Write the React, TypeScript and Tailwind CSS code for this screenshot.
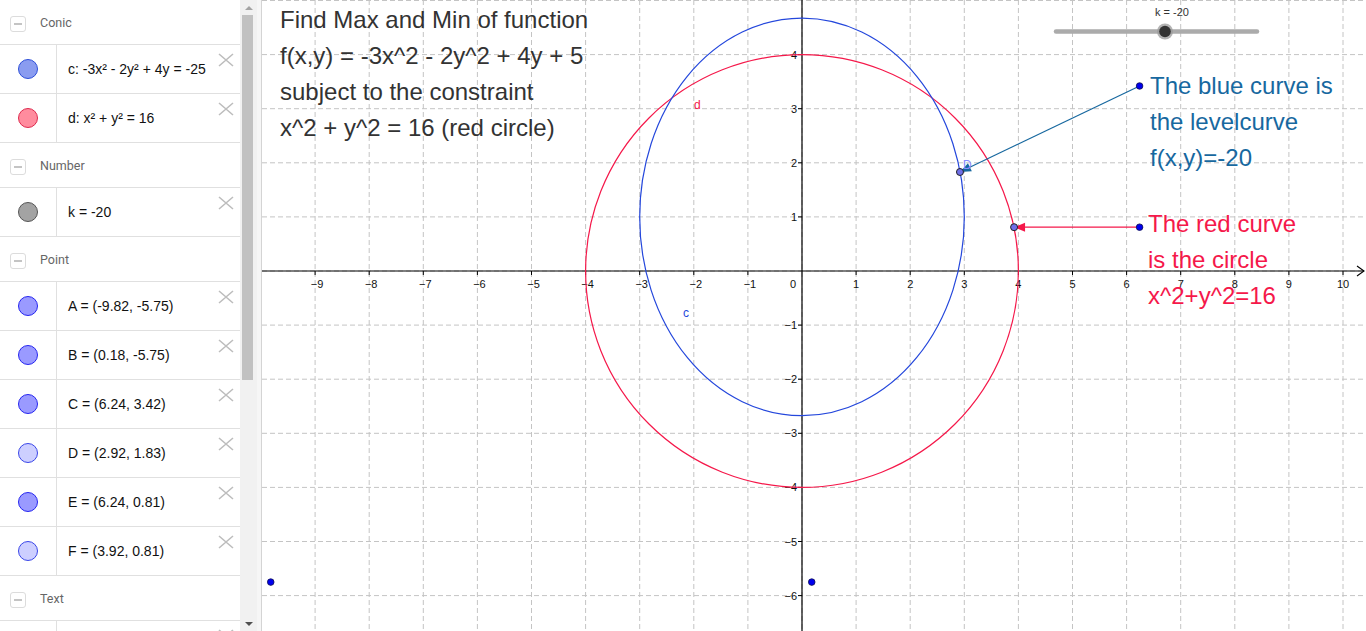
import React from "react";

const OX = 802;
const OY = 271;
const S = 54.1;

function XIcon() {
  return (
    <svg width="16" height="14" viewBox="0 0 16 14" className="block">
      <path d="M1 1 L15 13 M15 1 L1 13" stroke="#bdbdbd" strokeWidth="1.6" fill="none" />
    </svg>
  );
}

function Header({ label }: { label: string }) {
  return (
    <div className="h-[45px] shrink-0 flex items-center border-b border-[#e0e0e0] pl-[10px] pt-[3px]">
      <div className="w-[16px] h-[16px] rounded-[3px] border border-[#dcdcdc] flex items-center justify-center">
        <div className="w-[8px] h-[2px] bg-[#c4c4c4]" />
      </div>
      <span className="ml-[14px] text-[12.5px] text-[#666] font-['Roboto','Liberation_Sans',sans-serif]">{label}</span>
    </div>
  );
}

function Row({ text, fill, border }: { text: string; fill: string; border: string }) {
  return (
    <div className="h-[49px] shrink-0 flex border-b border-[#e0e0e0]">
      <div className="w-[57px] shrink-0 border-r border-[#e0e0e0] flex items-center justify-center">
        <div className={`w-[20px] h-[20px] rounded-full border ${fill} ${border}`} />
      </div>
      <div className="flex-1 relative flex items-center pl-[11px] text-[14px] text-[#111] whitespace-nowrap">
        {text}
        <div className="absolute right-[6px] top-[8px]">
          <XIcon />
        </div>
      </div>
    </div>
  );
}

function Graphics() {
  const vLines: number[] = [];
  for (let i = -10; i <= 10; i++) {
    const x = OX + i * S;
    if (x > 262 && x < 1366) vLines.push(i);
  }
  const hLines: number[] = [];
  for (let j = -7; j <= 5; j++) {
    const y = OY - j * S;
    if (y >= 0 && y < 631) hLines.push(j);
  }
  const fmt = (n: number) => (n < 0 ? "\u2212" + Math.abs(n) : String(n));
  const px = (x: number) => OX + x * S;
  const py = (y: number) => OY - y * S;

  const blue = "#2447dc";
  const red = "#f5184a";
  const tBlue = "#17689f";

  const A = [px(-9.82), py(-5.75)];
  const B = [px(0.18), py(-5.75)];
  const C = [px(6.24), py(3.42)];
  const D = [px(2.92), py(1.83)];
  const E = [px(6.24), py(0.81)];
  const F = [px(3.92), py(0.81)];

  const arrowHead = (from: number[], to: number[], len = 11, w = 4.5) => {
    const dx = to[0] - from[0];
    const dy = to[1] - from[1];
    const L = Math.hypot(dx, dy);
    const ux = dx / L;
    const uy = dy / L;
    const bx = to[0] - ux * len;
    const by = to[1] - uy * len;
    return `${to[0]},${to[1]} ${bx - uy * w},${by + ux * w} ${bx + uy * w},${by - ux * w}`;
  };
  const lineEnd = (from: number[], to: number[], back = 8) => {
    const dx = to[0] - from[0];
    const dy = to[1] - from[1];
    const L = Math.hypot(dx, dy);
    return [to[0] - (dx / L) * back, to[1] - (dy / L) * back];
  };
  const dEnd = lineEnd(C, D);
  const fEnd = lineEnd(E, F);

  return (
    <svg width="1104" height="631" viewBox="262 0 1104 631" className="block" fontFamily="'Liberation Sans', Arial, sans-serif">
      {/* grid */}
      {vLines.map((i) => (
        <line key={"v" + i} x1={px(i)} y1={0} x2={px(i)} y2={631} stroke="#c4c4c4" strokeWidth="1" strokeDasharray="5 3" />
      ))}
      {hLines.map((j) => (
        <line key={"h" + j} x1={262} y1={py(j)} x2={1366} y2={py(j)} stroke="#c4c4c4" strokeWidth="1" strokeDasharray="5 3" />
      ))}
      {/* axes */}
      <line x1={262} y1={OY} x2={1364} y2={OY} stroke="#000" strokeWidth="1.2" />
      <polyline points={`1357,${OY - 5} 1364,${OY} 1357,${OY + 5}`} fill="none" stroke="#000" strokeWidth="1.1" />
      <line x1={OX} y1={0} x2={OX} y2={631} stroke="#000" strokeWidth="1.2" />
      {/* tick marks and labels */}
      {vLines
        .filter((i) => i !== 0)
        .map((i) => (
          <g key={"xl" + i}>
            <line x1={px(i)} y1={OY} x2={px(i)} y2={OY + 4} stroke="#000" strokeWidth="1" />
            <text x={px(i) + (i < 0 ? 2 : 0)} y={OY + 17} fontSize="11" textAnchor="middle" fill="#111">
              {fmt(i)}
            </text>
          </g>
        ))}
      {hLines
        .filter((j) => j !== 0 && j < 5)
        .map((j) => (
          <g key={"yl" + j}>
            <line x1={OX - 4} y1={py(j)} x2={OX} y2={py(j)} stroke="#000" strokeWidth="1" />
            <text x={OX - 5} y={py(j) + 4} fontSize="11" textAnchor="end" fill="#111">
              {fmt(j)}
            </text>
          </g>
        ))}
      <text x={OX - 6} y={OY + 17} fontSize="11" textAnchor="end" fill="#111">
        0
      </text>

      {/* conics */}
      <circle cx={OX} cy={OY} r={4 * S} fill="none" stroke={red} strokeWidth="1.2" />
      <ellipse cx={OX} cy={py(1)} rx={3 * S} ry={Math.sqrt(13.5) * S} fill="none" stroke={blue} strokeWidth="1.2" />
      <text x={694} y={109} fontSize="12" fill={red}>
        d
      </text>
      <text x={683} y={317} fontSize="12" fill={blue}>
        c
      </text>

      {/* vectors */}
      <line x1={C[0]} y1={C[1]} x2={dEnd[0]} y2={dEnd[1]} stroke={tBlue} strokeWidth="1.2" />
      <polygon points={arrowHead(C, D)} fill={tBlue} />
      <line x1={E[0]} y1={E[1]} x2={fEnd[0]} y2={fEnd[1]} stroke={red} strokeWidth="1.2" />
      <polygon points={arrowHead(E, F)} fill={red} />

      {/* points */}
      {[A, B, C, E].map((p, k) => (
        <circle key={"p" + k} cx={p[0]} cy={p[1]} r={3.3} fill="#0000ee" stroke="#101050" strokeWidth="0.8" />
      ))}
      <circle cx={D[0]} cy={D[1]} r={3.5} fill="#6f6fe8" stroke="#222" strokeWidth="1" />
      <circle cx={F[0]} cy={F[1]} r={3.5} fill="#6f6fe8" stroke="#222" strokeWidth="1" />
      <text x={963} y={169} fontSize="12" fill="#8a8aff">
        D
      </text>

      {/* slider */}
      <text x={1172} y={16} fontSize="11" textAnchor="middle" fill="#333">
        k = -20
      </text>
      <line x1={1056} y1={31.5} x2={1257} y2={31.5} stroke="#ababab" strokeWidth="4.5" strokeLinecap="round" />
      <circle cx={1165} cy={31.5} r={8} fill="#9a9a9a" opacity="0.75" />
      <circle cx={1165} cy={31.5} r={5.8} fill="#333" />

      {/* main text */}
      <g fontSize="24" fill="#333">
        <text x={280} y={28}>Find Max and Min of function</text>
        <text x={280} y={64}>f(x,y) = -3x^2 - 2y^2 + 4y + 5</text>
        <text x={280} y={100}>subject to the constraint</text>
        <text x={280} y={136}>x^2 + y^2 = 16 (red circle)</text>
      </g>
      <g fontSize="24" fill={tBlue}>
        <text x={1150} y={94}>The blue curve is</text>
        <text x={1150} y={130}>the levelcurve</text>
        <text x={1150} y={166}>f(x,y)=-20</text>
      </g>
      <g fontSize="24" fill={red}>
        <text x={1148} y={232}>The red curve</text>
        <text x={1148} y={268}>is the circle</text>
        <text x={1148} y={304}>x^2+y^2=16</text>
      </g>
    </svg>
  );
}

export default function App() {
  const pt = { fill: "bg-[#9a9aff]", border: "border-[#2626f0]" };
  const ptL = { fill: "bg-[#cdcfff]", border: "border-[#3a46e8]" };
  return (
    <div className="flex w-[1366px] h-[631px] overflow-hidden bg-white font-['Liberation_Sans',Arial,sans-serif]">
      <div className="w-[240px] shrink-0 flex flex-col overflow-hidden">
        <Header label="Conic" />
        <Row text="c: -3x² - 2y² + 4y = -25" fill="bg-[#8a9cf0]" border="border-[#2d4fd8]" />
        <Row text="d: x² + y² = 16" fill="bg-[#ff8c9e]" border="border-[#de2a4e]" />
        <Header label="Number" />
        <Row text="k = -20" fill="bg-[#a3a3a3]" border="border-[#555]" />
        <Header label="Point" />
        <Row text="A = (-9.82, -5.75)" {...pt} />
        <Row text="B = (0.18, -5.75)" {...pt} />
        <Row text="C = (6.24, 3.42)" {...pt} />
        <Row text="D = (2.92, 1.83)" {...ptL} />
        <Row text="E = (6.24, 0.81)" {...pt} />
        <Row text="F = (3.92, 0.81)" {...ptL} />
        <Header label="Text" />
        <Row text="" fill="bg-white" border="border-white" />
      </div>
      <div className="w-[17px] shrink-0 bg-[#f1f1f1] flex flex-col">
        <div className="h-[15px] flex items-center justify-center">
          <div className="w-0 h-0 border-l-[4px] border-r-[4px] border-b-[4px] border-l-transparent border-r-transparent border-b-[#a3a3a3]" />
        </div>
        <div className="flex-1">
          <div className="ml-[2px] w-[11px] h-[365px] bg-[#c1c1c1]" />
        </div>
        <div className="h-[15px] flex items-center justify-center">
          <div className="w-0 h-0 border-l-[4px] border-r-[4px] border-t-[4px] border-l-transparent border-r-transparent border-t-[#505050]" />
        </div>
      </div>
      <div className="w-[5px] shrink-0 bg-[#f6f6f6] border-r border-[#d4d4d4]" />
      <div className="w-[1104px] shrink-0 relative">
        <Graphics />
      </div>
    </div>
  );
}
